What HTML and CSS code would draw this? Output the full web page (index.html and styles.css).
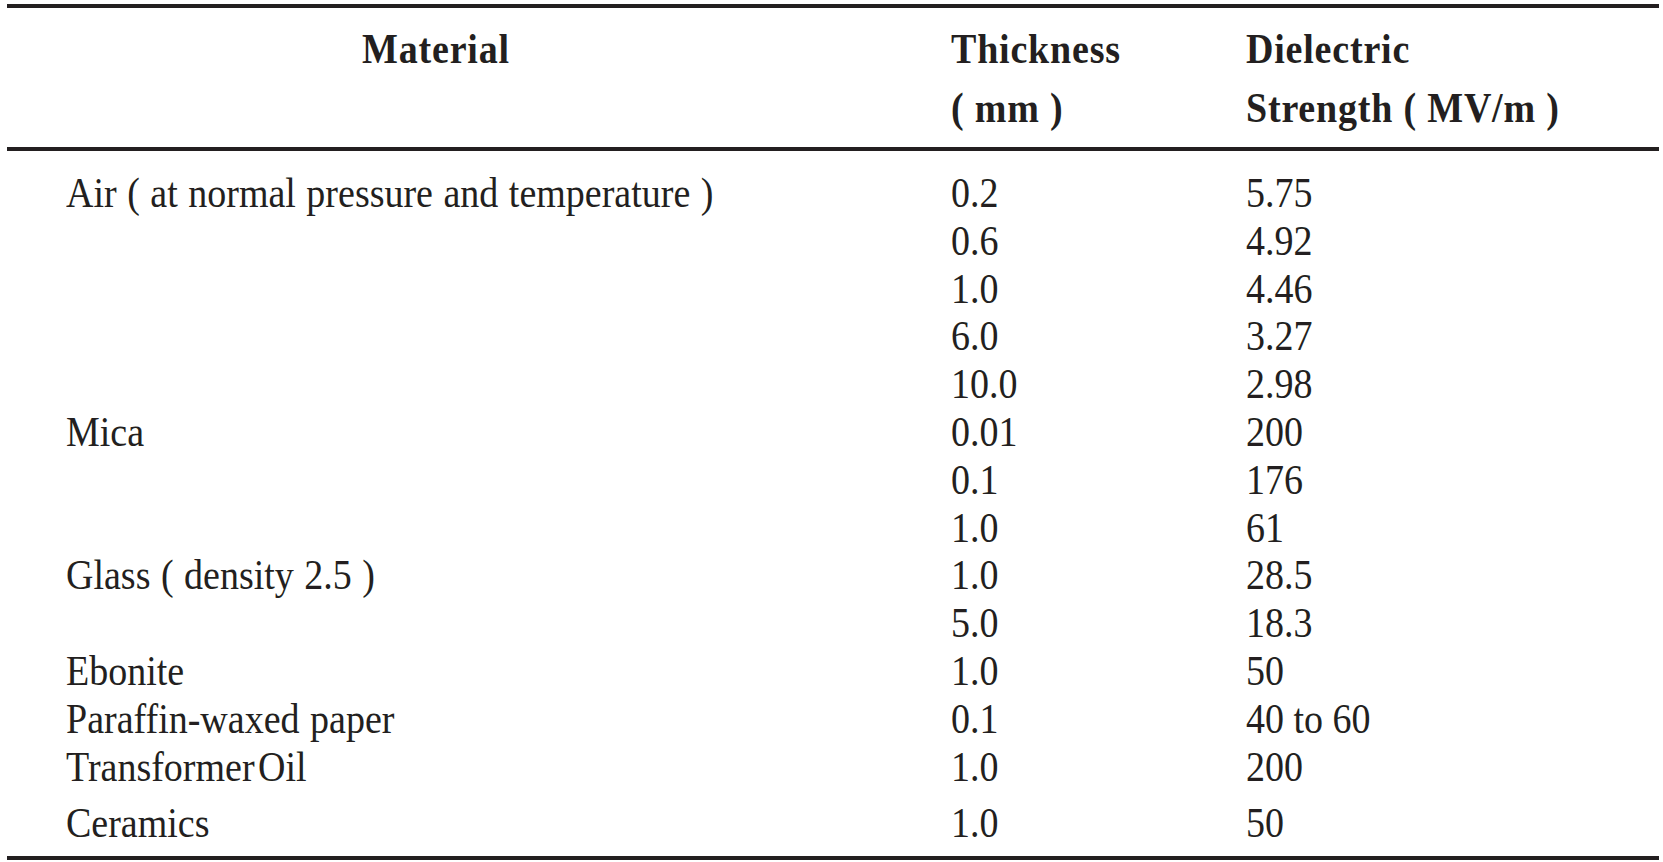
FILE: index.html
```html
<!DOCTYPE html>
<html lang="en">
<head>
<meta charset="utf-8">
<title>Dielectric Strength of Materials</title>
<link rel="stylesheet" href="styles.css">
</head>
<body>
<div class="sheet">
  <div class="head">
    <div class="cell material-head"><span class="t">Material</span></div>
    <div class="cell thick"><span class="t">Thickness</span><br><span class="t">( mm )</span></div>
    <div class="cell strength"><span class="t">Dielectric</span><br><span class="t">Strength ( MV/m )</span></div>
  </div>
  <div class="body">
    <div class="row"><div class="cell material"><span class="t">Air ( at normal pressure and temperature )</span></div><div class="cell thick"><span class="t">0.2</span></div><div class="cell strength"><span class="t">5.75</span></div></div>
    <div class="row"><div class="cell material"></div><div class="cell thick"><span class="t">0.6</span></div><div class="cell strength"><span class="t">4.92</span></div></div>
    <div class="row"><div class="cell material"></div><div class="cell thick"><span class="t">1.0</span></div><div class="cell strength"><span class="t">4.46</span></div></div>
    <div class="row"><div class="cell material"></div><div class="cell thick"><span class="t">6.0</span></div><div class="cell strength"><span class="t">3.27</span></div></div>
    <div class="row"><div class="cell material"></div><div class="cell thick"><span class="t">10.0</span></div><div class="cell strength"><span class="t">2.98</span></div></div>
    <div class="row"><div class="cell material"><span class="t">Mica</span></div><div class="cell thick"><span class="t">0.01</span></div><div class="cell strength"><span class="t">200</span></div></div>
    <div class="row"><div class="cell material"></div><div class="cell thick"><span class="t">0.1</span></div><div class="cell strength"><span class="t">176</span></div></div>
    <div class="row"><div class="cell material"></div><div class="cell thick"><span class="t">1.0</span></div><div class="cell strength"><span class="t">61</span></div></div>
    <div class="row"><div class="cell material"><span class="t">Glass ( density 2.5 )</span></div><div class="cell thick"><span class="t">1.0</span></div><div class="cell strength"><span class="t">28.5</span></div></div>
    <div class="row"><div class="cell material"></div><div class="cell thick"><span class="t">5.0</span></div><div class="cell strength"><span class="t">18.3</span></div></div>
    <div class="row"><div class="cell material"><span class="t">Ebonite</span></div><div class="cell thick"><span class="t">1.0</span></div><div class="cell strength"><span class="t">50</span></div></div>
    <div class="row"><div class="cell material"><span class="t">Paraffin-waxed paper</span></div><div class="cell thick"><span class="t">0.1</span></div><div class="cell strength"><span class="t">40 to 60</span></div></div>
    <div class="row"><div class="cell material tight"><span class="t">Transformer Oil</span></div><div class="cell thick"><span class="t">1.0</span></div><div class="cell strength"><span class="t">200</span></div></div>
    <div class="row last"><div class="cell material"><span class="t">Ceramics</span></div><div class="cell thick"><span class="t">1.0</span></div><div class="cell strength"><span class="t">50</span></div></div>
  </div>
</div>
</body>
</html>
```
FILE: styles.css
```css
html, body {
  margin: 0;
  padding: 0;
  background: #ffffff;
}

body {
  font-family: "Liberation Serif", "Times New Roman", serif;
  font-size: 38px;
  color: #231f20;
}

.sheet {
  margin: 4px 0 0 7px;
  width: 1652px;
  border-top: 4px solid #231f20;
  border-bottom: 4px solid #231f20;
}

.head,
.row {
  display: grid;
  grid-template-columns: 858px 381px 1fr;
}

.head {
  padding: 12px 0 9px;
  line-height: 59px;
  font-weight: bold;
  letter-spacing: 0.8px;
  border-bottom: 4px solid #231f20;
}

.body {
  padding: 19px 0 8px;
}

.row {
  line-height: 47.8px;
}

.row.last {
  margin-top: 9px;
}

.cell {
  white-space: nowrap;
}

/* condensed-looking glyphs: stretch each text line vertically around its own centre */
.t {
  display: inline-block;
  transform: scaleY(1.12);
  transform-origin: 50% 51%;
}

.material-head {
  text-align: center;
}

.material {
  padding-left: 59px;
  word-spacing: 1px;
}

.material.tight {
  word-spacing: -6px;
}

.thick {
  padding-left: 86px;
}

.strength {
  padding-left: 0;
}
```
